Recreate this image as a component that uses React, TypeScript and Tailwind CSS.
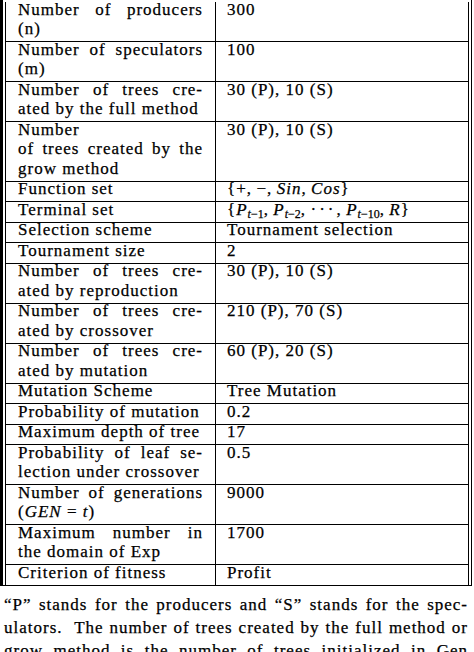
import type { ReactNode } from "react";

type Row = {
  left: string[];
  // indexes of non-final lines that LaTeX left ragged
  plain?: number[];
  right: ReactNode;
};

const sub = (s: string) => (
  <sub className="text-[12px] tracking-normal">
    <i>t</i>
    {s}
  </sub>
);

const rows: Row[] = [
  { left: ["Number of producers", "(n)"], right: "300" },
  { left: ["Number of speculators", "(m)"], right: "100" },
  { left: ["Number of trees cre-", "ated by the full method"], right: "30 (P), 10 (S)" },
  { left: ["Number", "of trees created by the", "grow method"], plain: [0], right: "30 (P), 10 (S)" },
  {
    left: ["Function set"],
    right: (
      <span>
        {"{+,\u2009−,\u2009"}
        <i>Sin</i>
        {",\u2009"}
        <i>Cos</i>
        {"}"}
      </span>
    ),
  },
  {
    left: ["Terminal set"],
    right: (
      <span>
        {"{"}
        <i>P</i>
        {sub("−1")}
        {",\u2009"}
        <i>P</i>
        {sub("−2")}
        {",\u2009"}
        <span className="tracking-[3px]">···</span>
        {",\u2009"}
        <i>P</i>
        {sub("−10")}
        {",\u2009"}
        <i>R</i>
        {"}"}
      </span>
    ),
  },
  { left: ["Selection scheme"], right: "Tournament selection" },
  { left: ["Tournament size"], right: "2" },
  { left: ["Number of trees cre-", "ated by reproduction"], right: "30 (P), 10 (S)" },
  { left: ["Number of trees cre-", "ated by crossover"], right: "210 (P), 70 (S)" },
  { left: ["Number of trees cre-", "ated by mutation"], right: "60 (P), 20 (S)" },
  { left: ["Mutation Scheme"], right: "Tree Mutation" },
  { left: ["Probability of mutation"], right: "0.2" },
  { left: ["Maximum depth of tree"], right: "17" },
  { left: ["Probability of leaf se-", "lection under crossover"], right: "0.5" },
  { left: ["Number of generations", "GEN"], right: "9000" },
  { left: ["Maximum number in", "the domain of Exp"], right: "1700" },
  { left: ["Criterion of fitness"], right: "Profit" },
];

function lineContent(text: string) {
  if (text === "GEN") {
    return (
      <>
        (<i>GEN</i> = <i>t</i>)
      </>
    );
  }
  return text;
}

function TableRow({ row, last }: { row: Row; last: boolean }) {
  return (
    <div className={`grid grid-cols-[210px_252px] leading-[19.5px] ${last ? "" : "border-b border-black"}`}>
      <div className="border-r border-black px-[12px]">
        <div className="-mt-[2.5px] mb-[2.5px]">
          {row.left.map((line, i) => {
            const justify = i < row.left.length - 1 && !row.plain?.includes(i);
            return (
              <div
                key={i}
                className={`whitespace-nowrap ${justify ? "text-justify [text-align-last:justify]" : ""}`}
              >
                {lineContent(line)}
              </div>
            );
          })}
        </div>
      </div>
      <div className="pl-[11px]">
        <div className="-mt-[2.5px] mb-[2.5px] whitespace-nowrap">{row.right}</div>
      </div>
    </div>
  );
}

const caption = [
  "“P” stands for the producers and “S” stands for the spec-",
  "ulators.  The number of trees created by the full method or",
  "grow method is the number of trees initialized in Gen",
];

export default function App() {
  return (
    <div className="w-[474px] h-[652px] overflow-hidden bg-white text-black font-['Liberation_Serif',serif] text-[17px] tracking-[1px] [-webkit-text-stroke:0.25px_black]">
      {/* Parameter table */}
      <div className="w-[472px] pt-[2px] pl-[2px] pr-[2px] border-l-[3px] border-r border-b border-black">
        <div className="border-l border-r border-black">
          {rows.map((row, i) => (
            <TableRow key={i} row={row} last={i === rows.length - 1} />
          ))}
        </div>
      </div>

      {/* Footnote */}
      <div className="ml-[4px] mt-[7px] w-[464px] leading-[23px]">
        {caption.map((line, i) => (
          <div key={i} className="whitespace-pre text-justify [text-align-last:justify]">
            {line}
          </div>
        ))}
      </div>
    </div>
  );
}
